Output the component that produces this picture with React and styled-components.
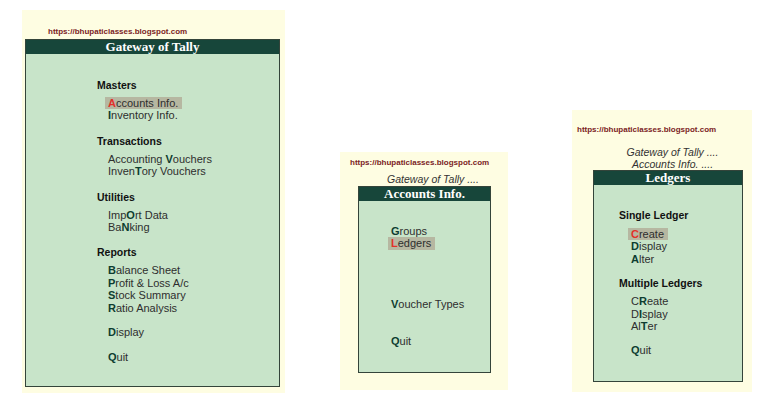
import React from 'react';
import styled, { createGlobalStyle } from 'styled-components';

const Global = createGlobalStyle`
  body {
    margin: 0;
    background: #fff;
    font-family: "Liberation Sans", Arial, sans-serif;
  }
`;

const Page = styled.div`
  display: flex;
  align-items: flex-start;
  width: 761px;
  height: 400px;
  padding-left: 22px;
  box-sizing: border-box;
  overflow: hidden;
`;

const Sheet = styled.div`
  display: flex;
  flex-direction: column;
  box-sizing: border-box;
  flex-shrink: 0;
  width: ${(p) => p.$w}px;
  height: ${(p) => p.$h}px;
  margin-top: ${(p) => p.$top}px;
  margin-left: ${(p) => p.$ml}px;
  padding-top: ${(p) => p.$pt}px;
  background: #fefde2;
`;

const Url = styled.div`
  margin-left: ${(p) => p.$indent}px;
  font-size: 8px;
  line-height: 10px;
  font-weight: bold;
  color: #7b1c1e;
`;

const Column = styled.div`
  display: flex;
  flex-direction: column;
  margin-left: ${(p) => p.$indent}px;
  margin-top: ${(p) => p.$gap}px;
`;

const Trail = styled.div`
  margin-bottom: ${(p) => p.$after}px;
  font-size: 10.5px;
  line-height: 12px;
  font-style: italic;
  color: #333;
  text-align: center;
`;

const Menu = styled.div`
  box-sizing: border-box;
  width: ${(p) => p.$w}px;
  height: ${(p) => p.$h}px;
  border: 1px solid #34443a;
  background: #c8e4c9;
`;

const Title = styled.div`
  height: 14px;
  line-height: 14px;
  background: #17463a;
  color: #fff;
  font-family: "Liberation Serif", "Times New Roman", serif;
  font-size: 13px;
  font-weight: bold;
  text-align: center;
`;

const Body = styled.div`
  padding-top: ${(p) => p.$pt}px;
  padding-left: ${(p) => p.$pl}px;
`;

const Section = styled.div`
  margin-top: ${(p) => p.$gap || 0}px;
`;

const Heading = styled.div`
  font-size: 10.5px;
  line-height: 13px;
  font-weight: bold;
  color: #111;
`;

const List = styled.div`
  margin-top: ${(p) => p.$gap || 0}px;
  padding-left: ${(p) => p.$indent || 0}px;
`;

const Item = styled.div`
  width: fit-content;
  margin-left: -3px;
  padding: 0 4px 0 3px;
  font-size: 11px;
  line-height: 12.6px;
  color: #2e2e2e;
  background: ${(p) => (p.$sel ? '#b6b7a1' : 'transparent')};
`;

const Hot = styled.b`
  color: ${(p) => (p.$sel ? '#e2302a' : '#0d3d30')};
`;

function Entry({ text, hot = 0, sel }) {
  return (
    <Item $sel={sel}>
      {text.slice(0, hot)}
      <Hot $sel={sel}>{text[hot]}</Hot>
      {text.slice(hot + 1)}
    </Item>
  );
}

const URL = 'https://bhupaticlasses.blogspot.com';

export default function App() {
  return (
    <>
      <Global />
      <Page>
        {/* Gateway of Tally */}
        <Sheet $w={263} $h={383} $top={10} $ml={0} $pt={17}>
          <Url $indent={26}>{URL}</Url>
          <Column $indent={3} $gap={2}>
            <Menu $w={255} $h={348}>
              <Title>Gateway of Tally</Title>
              <Body $pt={24.5} $pl={71}>
                <Section>
                  <Heading>Masters</Heading>
                  <List $gap={5} $indent={11}>
                    <Entry text="Accounts Info." sel />
                    <Entry text="Inventory Info." />
                  </List>
                </Section>
                <Section $gap={13}>
                  <Heading>Transactions</Heading>
                  <List $gap={5} $indent={11}>
                    <Entry text="Accounting Vouchers" hot={11} />
                    <Entry text="InvenTory Vouchers" hot={5} />
                  </List>
                </Section>
                <Section $gap={13}>
                  <Heading>Utilities</Heading>
                  <List $gap={5} $indent={11}>
                    <Entry text="ImpOrt Data" hot={3} />
                    <Entry text="BaNking" hot={2} />
                  </List>
                </Section>
                <Section $gap={12}>
                  <Heading>Reports</Heading>
                  <List $gap={5} $indent={11}>
                    <Entry text="Balance Sheet" />
                    <Entry text="Profit & Loss A/c" />
                    <Entry text="Stock Summary" />
                    <Entry text="Ratio Analysis" />
                  </List>
                </Section>
                <List $gap={12} $indent={11}>
                  <Entry text="Display" />
                </List>
                <List $gap={12} $indent={11}>
                  <Entry text="Quit" />
                </List>
              </Body>
            </Menu>
          </Column>
        </Sheet>

        {/* Accounts Info. */}
        <Sheet $w={168} $h={238} $top={152} $ml={55} $pt={6}>
          <Url $indent={10}>{URL}</Url>
          <Column $indent={18} $gap={5}>
            <Trail $after={1}>Gateway of Tally ....</Trail>
            <Menu $w={133} $h={187}>
              <Title>Accounts Info.</Title>
              <Body $pt={23.5} $pl={32}>
                <List>
                  <Entry text="Groups" />
                  <Entry text="Ledgers" sel />
                </List>
                <List $gap={48.8}>
                  <Entry text="Voucher Types" />
                </List>
                <List $gap={24.4}>
                  <Entry text="Quit" />
                </List>
              </Body>
            </Menu>
          </Column>
        </Sheet>

        {/* Ledgers */}
        <Sheet $w={180} $h={282} $top={110} $ml={64} $pt={15}>
          <Url $indent={5}>{URL}</Url>
          <Column $indent={21} $gap={11}>
            <Trail $after={0}>
              Gateway of Tally ....
              <br />
              Accounts Info. ....
            </Trail>
            <Menu $w={150} $h={212}>
              <Title>Ledgers</Title>
              <Body $pt={23.5} $pl={25}>
                <Section>
                  <Heading>Single Ledger</Heading>
                  <List $gap={6} $indent={12}>
                    <Entry text="Create" sel />
                    <Entry text="Display" />
                    <Entry text="Alter" />
                  </List>
                </Section>
                <Section $gap={12}>
                  <Heading>Multiple Ledgers</Heading>
                  <List $gap={5} $indent={12}>
                    <Entry text="CReate" hot={1} />
                    <Entry text="DIsplay" hot={1} />
                    <Entry text="AlTer" hot={2} />
                  </List>
                </Section>
                <List $gap={11} $indent={12}>
                  <Entry text="Quit" />
                </List>
              </Body>
            </Menu>
          </Column>
        </Sheet>
      </Page>
    </>
  );
}
